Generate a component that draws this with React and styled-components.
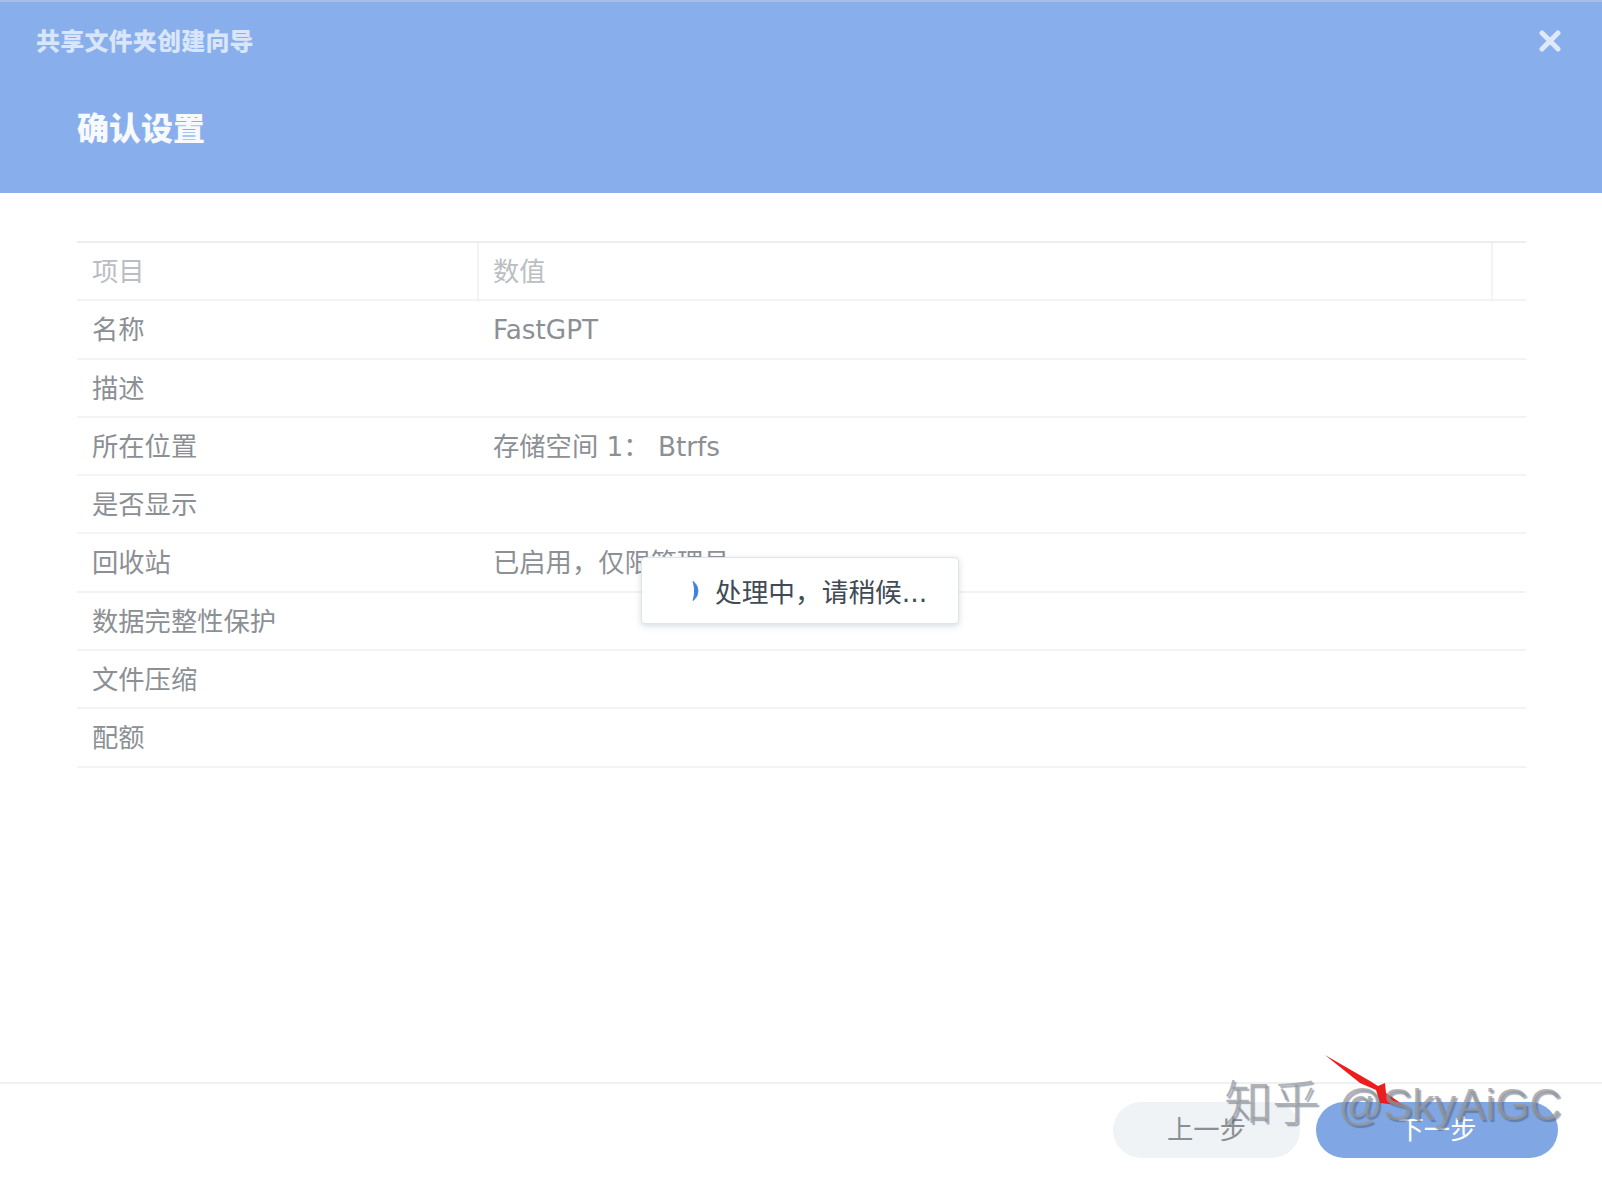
import React from "react";
import styled, { createGlobalStyle } from "styled-components";

const GlobalStyle = createGlobalStyle`
  html, body {
    margin: 0;
    padding: 0;
    background: #fff;
  }
  body {
    font-family: "DejaVu Sans", "Noto Sans CJK SC", sans-serif;
  }
`;

const Wizard = styled.div`
  position: relative;
  width: 1602px;
  height: 1177px;
  display: flex;
  flex-direction: column;
  overflow: hidden;
  background: #fff;
`;

const Header = styled.header`
  height: 193px;
  box-sizing: border-box;
  flex: none;
  position: relative;
  background: #88afec;
  border-top: 2px solid #a5bfe6;
  padding: 20px 36px 0;
`;

const WindowTitle = styled.div`
  font-size: 24px;
  line-height: 36px;
  font-weight: 900;
  letter-spacing: 0.2px;
  color: #d9e5f8;
  font-family: "Noto Sans CJK SC", sans-serif;
`;

const StepTitle = styled.h1`
  margin: 44px 0 0 41px;
  font-size: 32px;
  line-height: 48px;
  font-weight: 900;
  color: #f6f9fe;
  font-family: "Noto Sans CJK SC", sans-serif;
`;

const CloseButton = styled.svg`
  position: absolute;
  top: 28px;
  right: 41px;
  width: 22px;
  height: 22px;
`;

const Body = styled.main`
  flex: 1;
  padding: 48px 76px 0 77px;
`;

const Table = styled.div`
  border-top: 2px solid #ebedef;
`;

const Row = styled.div`
  display: grid;
  grid-template-columns: 402px 1014px 1fr;
  height: 58.3px;
  box-sizing: border-box;
  border-bottom: 2px solid #f2f3f5;
  font-size: 26.3px;
  color: ${(p) => (p.$head ? "#babec2" : "#8c9095")};
  line-height: 59px;
`;

const Cell = styled.div`
  padding-left: ${(p) => (p.$first ? "15px" : "14px")};
  white-space: pre;
  border-right: ${(p) => (p.$divided ? "2px solid #f2f3f5" : "none")};
`;

const Footer = styled.footer`
  flex: none;
  height: 95px;
  box-sizing: border-box;
  border-top: 2px solid #eef0f2;
  display: flex;
  justify-content: flex-end;
  gap: 16px;
  padding: 18px 44px 0 0;
`;

const Button = styled.button`
  width: ${(p) => (p.$primary ? "242px" : "187px")};
  height: 56px;
  border: none;
  border-radius: 28px;
  font-family: inherit;
  font-size: 26.3px;
  line-height: 56px;
  padding: 0;
  background: ${(p) => (p.$primary ? "#80a7e3" : "#f0f3f6")};
  color: ${(p) => (p.$primary ? "#fff" : "#8b8f93")};
`;

const Toast = styled.div`
  position: absolute;
  left: 641px;
  top: 557px;
  width: 318px;
  height: 67px;
  box-sizing: border-box;
  display: flex;
  align-items: center;
  padding: 0 0 0 48px;
  gap: 15px;
  background: #fff;
  border-radius: 4px;
  border: 1px solid #dfe4ea;
  box-shadow: 0 2px 6px rgba(120, 135, 155, 0.3);
  font-size: 26.7px;
  color: #414b55;
  white-space: nowrap;
`;

const Watermark = styled.div`
  position: absolute;
  left: 1224px;
  top: 1074px;
  font-size: 44px;
  line-height: 60px;
  color: rgba(150, 150, 150, 0.72);
  text-shadow: 2px 2px 1px rgba(70, 90, 120, 0.5);
  white-space: nowrap;
  pointer-events: none;
  font-family: "Liberation Sans", "Noto Sans CJK SC", sans-serif;
`;

const WatermarkBrand = styled.span`
  font-size: 48px;
  font-weight: 300;
  margin-right: 6px;
`;

const Arrow = styled.svg`
  position: absolute;
  left: 1320px;
  top: 1050px;
  width: 90px;
  height: 60px;
  pointer-events: none;
`;

const rows = [
  ["名称", "FastGPT"],
  ["描述", ""],
  ["所在位置", "存储空间 1： Btrfs"],
  ["是否显示", ""],
  ["回收站", "已启用，仅限管理员"],
  ["数据完整性保护", ""],
  ["文件压缩", ""],
  ["配额", ""],
];

export default function App() {
  return (
    <Wizard>
      <GlobalStyle />
      <Header>
        <WindowTitle>共享文件夹创建向导</WindowTitle>
        <StepTitle>确认设置</StepTitle>
        <CloseButton viewBox="0 0 22 22">
          <path d="M3 3 L19 19 M19 3 L3 19" stroke="#dfe9fa" strokeWidth="5" strokeLinecap="round" />
        </CloseButton>
      </Header>
      <Body>
        <Table>
          <Row $head>
            <Cell $first $divided>项目</Cell>
            <Cell $divided>数值</Cell>
            <Cell />
          </Row>
          {rows.map(([label, value]) => (
            <Row key={label}>
              <Cell $first>{label}</Cell>
              <Cell>{value}</Cell>
              <Cell />
            </Row>
          ))}
        </Table>
      </Body>
      <Footer>
        <Button>上一步</Button>
        <Button $primary>下一步</Button>
      </Footer>
      <Toast>
        <svg width="10" height="20" viewBox="0 0 10 20">
          <path d="M3 0.5 C9.5 5 9.5 15 3 19.5 C5 14 5 6 3 0.5 Z" fill="#3f7fe0" stroke="#3f7fe0" strokeWidth="1" />
        </svg>
        <span>处理中，请稍候...</span>
      </Toast>
      <Arrow viewBox="0 0 90 60">
        <path d="M5 5 L50 31 L58 36 L65 33 L66 43 L85 56 L60 53 L56 40 L40 33 Z" fill="#ee1c1c" />
      </Arrow>
      <Watermark>
        <WatermarkBrand>知乎</WatermarkBrand> @SkyAiGC
      </Watermark>
    </Wizard>
  );
}
